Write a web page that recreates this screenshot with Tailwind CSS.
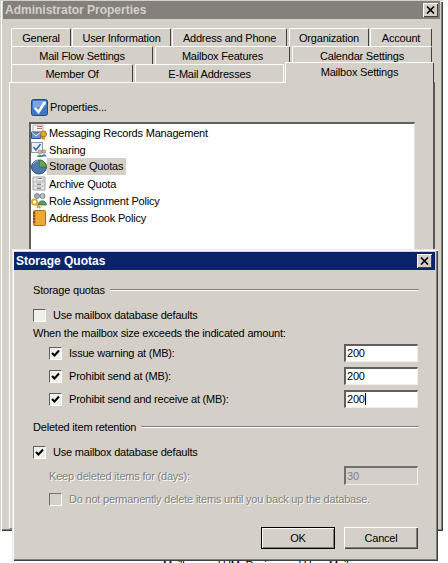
<!DOCTYPE html>
<html lang="en">
<head>
  <meta charset="UTF-8">
  <title>Administrator Properties</title>
  <script src="https://cdn.jsdelivr.net/npm/@tailwindcss/browser@4"></script>
</head>
<body class="bg-white">
  <div class="relative w-[448px] h-[563px] overflow-hidden bg-white text-black text-[11px] tracking-[-0.2px] leading-4 font-['Liberation_Sans',Arial,sans-serif]">

    <!-- Fenetre arriere -->
    <div class="w-[443px] h-[531px] bg-[#d4d0c8] pt-[1px] px-[3px] shadow-[inset_1px_1px_0_#d4d0c8,inset_2px_2px_0_#fff,inset_-1px_-1px_0_#404040,inset_-2px_-2px_0_#808080]">
      <div class="h-[18px] bg-[#84807c] flex items-center justify-between pl-[2px] pr-[2px]">
        <span class="font-bold text-[12px] tracking-normal text-[#d4d0c8]">Administrator Properties</span>
        <span class="w-[15px] h-[14px] bg-[#d4d0c8] flex items-center justify-center shadow-[inset_1px_1px_0_#fff,inset_-1px_-1px_0_#404040]">
          <svg width="9" height="8" viewBox="0 0 9 8"><path d="M1 0.5 L8 7.5 M8 0.5 L1 7.5" stroke="#000" stroke-width="1.6"/></svg>
        </span>
      </div>

      <!-- Onglets -->
      <div class="pt-[9px] pl-[8px]">
        <div class="flex gap-[1px] h-[18px] text-center leading-[18px]">
          <div class="w-[60px] bg-[#d4d0c8] border-t border-l border-white border-r border-r-[#404040] rounded-t-[2px]">General</div>
          <div class="w-[99px] bg-[#d4d0c8] border-t border-l border-white border-r border-r-[#404040] rounded-t-[2px]">User Information</div>
          <div class="w-[115px] bg-[#d4d0c8] border-t border-l border-white border-r border-r-[#404040] rounded-t-[2px]">Address and Phone</div>
          <div class="w-[80px] ml-[1px] bg-[#d4d0c8] border-t border-l border-white border-r border-r-[#404040] rounded-t-[2px]">Organization</div>
          <div class="w-[62px] bg-[#d4d0c8] border-t border-l border-white border-r border-r-[#404040] rounded-t-[2px]">Account</div>
        </div>
        <div class="flex gap-[1px] h-[18px] text-center leading-[18px]">
          <div class="w-[142px] bg-[#d4d0c8] border-t border-l border-white border-r border-r-[#404040] rounded-t-[2px]">Mail Flow Settings</div>
          <div class="w-[135px] ml-[1px] bg-[#d4d0c8] border-t border-l border-white border-r border-r-[#404040] rounded-t-[2px]">Mailbox Features</div>
          <div class="w-[140px] ml-[1px] bg-[#d4d0c8] border-t border-l border-white border-r border-r-[#404040] rounded-t-[2px]">Calendar Settings</div>
        </div>
        <div class="flex gap-[1px] h-[18px] text-center leading-[18px]">
          <div class="w-[122px] bg-[#d4d0c8] border-t border-l border-white border-r border-r-[#404040] rounded-t-[2px]">Member Of</div>
          <div class="w-[149px] ml-[1px] bg-[#d4d0c8] border-t border-l border-r border-white">E-Mail Addresses</div>
          <div class="relative z-10 w-[149px] h-[21px] -mt-[2px] bg-[#d4d0c8] border-t border-l border-white border-r border-r-[#404040] rounded-t-[2px]">Mailbox Settings</div>
        </div>
      </div>

      <!-- Panneau -->
      <div class="ml-[6px] w-[426px] h-[447px] pt-[15px] pl-[19px] border-t border-l border-white border-r-2 border-r-[#5a5a5a] border-b border-b-[#808080]">
        <div class="flex items-center h-[18px] gap-[2px] pl-[2px]">
          <svg width="17" height="17" viewBox="0 0 17 17">
            <rect x="0.5" y="0.5" width="16" height="16" rx="2" fill="#3f78c8" stroke="#234a85"/>
            <path d="M2 2 H15 V6 L2 10 Z" fill="#7ba6e2"/>
            <path d="M4 9 L7.5 13 L14 3" fill="none" stroke="#fff" stroke-width="2.6"/>
          </svg>
          <span>Properties...</span>
        </div>
        <div class="mt-[6px] w-[386px] h-[141px] bg-white border-t-2 border-l-2 border-[#5f5f5f] border-r border-r-[#e8e6e0]">
          <div class="flex items-center h-[17px]">
            <svg width="16" height="17" viewBox="0 0 16 17">
              <path d="M2 1 H12 V9 H2 Z" fill="#f4f4f4" stroke="#b0b0b0"/>
              <path d="M6 2.5 H11 M6 4.5 H11" stroke="#c86a5a"/>
              <path d="M0.5 8 H10 V14.5 H0.5 Z" fill="#6d93c4" stroke="#2f5587"/>
              <path d="M0.5 8 L5 12 L10 8" fill="none" stroke="#dfe8f4"/>
              <circle cx="12.5" cy="10" r="3" fill="#e6a92a" stroke="#a8741a"/>
              <path d="M11 13 V16 L12.5 15 L14 16 V13" fill="#d98e20"/>
            </svg>
            <span class="ml-[2px]">Messaging Records Management</span>
          </div>
          <div class="flex items-center h-[17px]">
            <svg width="16" height="17" viewBox="0 0 16 17">
              <rect x="0.5" y="1.5" width="11" height="10" fill="#eef2f7" stroke="#8d9aaa"/>
              <path d="M2.5 6 L5 9 L9.5 3" fill="none" stroke="#3567b0" stroke-width="1.6"/>
              <circle cx="9" cy="11" r="2" fill="#d9b48a" stroke="#6b6b6b" stroke-width="0.5"/>
              <path d="M6 16 C6 13 12 13 12 16 Z" fill="#4c9a57"/>
              <circle cx="13" cy="10.5" r="1.8" fill="#d9b48a" stroke="#6b6b6b" stroke-width="0.5"/>
              <path d="M10.5 15.5 C10.5 12.5 15.5 12.5 15.5 15.5 Z" fill="#4b78bd"/>
            </svg>
            <span class="ml-[2px]">Sharing</span>
          </div>
          <div class="flex items-center h-[17px]">
            <svg width="16" height="17" viewBox="0 0 16 17">
              <ellipse cx="8" cy="9" rx="7.5" ry="7" fill="#4f78ad" stroke="#2e4f7c"/>
              <path d="M8 9 L9 2 C12 2.3 14.6 4.5 15.5 9 Z" fill="#63a84a" stroke="#3c6f2b" stroke-width="0.7"/>
              <path d="M2 6 C3 4 5 3 7 2.6" fill="none" stroke="#a9c3e2"/>
            </svg>
            <span class="bg-[#d4d0c8] pl-[2px] h-[17px] leading-[17px] pr-[3px]">Storage Quotas</span>
          </div>
          <div class="flex items-center h-[17px]">
            <svg width="16" height="17" viewBox="0 0 16 17">
              <path d="M2 2 H14 V15 H2 Z" fill="#e4e4e4" stroke="#a4a4a4"/>
              <path d="M2 7 H14 M2 11 H14" stroke="#b4b4b4"/>
              <path d="M6 2 H12 V6 H6 Z" fill="#fff" stroke="#b8b8b8"/>
              <path d="M7 3.5 H11" stroke="#c05a4a"/>
              <rect x="6" y="8.5" width="4" height="1.5" fill="#8c8c8c"/>
              <rect x="6" y="12.5" width="4" height="1.5" fill="#8c8c8c"/>
            </svg>
            <span class="ml-[2px]">Archive Quota</span>
          </div>
          <div class="flex items-center h-[17px]">
            <svg width="16" height="17" viewBox="0 0 16 17">
              <circle cx="6" cy="4" r="2.5" fill="#a8b2bd" stroke="#565f69" stroke-width="0.7"/>
              <circle cx="11.5" cy="4" r="2.5" fill="#bcc4cd" stroke="#565f69" stroke-width="0.7"/>
              <path d="M7 13 C7 8 15 7 15.5 13 Z" fill="#5f9a64" stroke="#33633a" stroke-width="0.7"/>
              <circle cx="3.5" cy="10" r="2.6" fill="none" stroke="#d2a92a" stroke-width="1.7"/>
              <path d="M5 12 L9.5 16 M7.5 14.2 L6 16" stroke="#d2a92a" stroke-width="1.7"/>
            </svg>
            <span class="ml-[2px]">Role Assignment Policy</span>
          </div>
          <div class="flex items-center h-[17px]">
            <svg width="16" height="17" viewBox="0 0 16 17">
              <rect x="2.5" y="1.5" width="12" height="15" rx="1" fill="#eda83a" stroke="#a86f14"/>
              <rect x="2" y="2" width="2.5" height="14" fill="#c9861f"/>
              <path d="M2 4 H4 M2 7 H4 M2 10 H4 M2 13 H4" stroke="#222"/>
            </svg>
            <span class="ml-[2px]">Address Book Policy</span>
          </div>
        </div>
      </div>
    </div>

    <!-- Texte derriere le dialogue -->
    <div class="pl-[163px] mt-[26px] whitespace-nowrap">Mailbox and UM. Review and User Mail</div>

    <!-- Dialogue Storage Quotas -->
    <div class="absolute left-[12px] top-[249px] w-[426px] h-[312px] bg-[#d4d0c8] pl-[2px] pr-[3px] pt-[3px] shadow-[inset_1px_1px_0_#e8e6e0,inset_2px_2px_0_#fff,inset_-1px_-1px_0_#404040,inset_-2px_-2px_0_#808080]">
      <div class="h-[18px] bg-[#0a246a] flex items-center justify-between pl-[2px] pr-[3px]">
        <span class="font-bold text-[12px] tracking-normal text-white">Storage Quotas</span>
        <span class="w-[15px] h-[14px] bg-[#d4d0c8] flex items-center justify-center shadow-[inset_1px_1px_0_#fff,inset_-1px_-1px_0_#404040]">
          <svg width="9" height="8" viewBox="0 0 9 8"><path d="M1 0.5 L8 7.5 M8 0.5 L1 7.5" stroke="#000" stroke-width="1.6"/></svg>
        </span>
      </div>

      <div class="pl-[19px] w-[405px]">
        <div class="mt-[12px] flex items-center h-[16px] gap-[5px]">
          <span>Storage quotas</span>
          <div class="flex-1 h-[2px] border-t border-[#808080] border-b border-b-white"></div>
        </div>

        <div class="mt-[9px] flex items-center h-[16px] gap-[7px]">
          <span class="w-[13px] h-[13px] bg-[#f1efea] border border-[#606060] border-r-white border-b-white"></span>
          <span>Use mailbox database defaults</span>
        </div>
        <div class="mt-[2px] h-[16px]">When the mailbox size exceeds the indicated amount:</div>

        <div class="mt-[3px] pl-[16px] pr-[1px] flex items-center h-[18px] gap-[7px]">
          <span class="w-[13px] h-[13px] bg-[#f1efea] border border-[#606060] border-r-white border-b-white flex items-center justify-center">
            <svg width="9" height="9" viewBox="0 0 9 9"><path d="M1 4 L3.5 6.5 L8 1.5" fill="none" stroke="#000" stroke-width="2"/></svg>
          </span>
          <span class="flex-1">Issue warning at (MB):</span>
          <div class="w-[74px] h-[18px] bg-white border-t-2 border-l-2 border-[#5f5f5f] border-r border-b border-r-[#f0eee9] border-b-[#f0eee9] pl-[1px] leading-[15px]">200</div>
        </div>
        <div class="mt-[5px] pl-[16px] pr-[1px] flex items-center h-[18px] gap-[7px]">
          <span class="w-[13px] h-[13px] bg-[#f1efea] border border-[#606060] border-r-white border-b-white flex items-center justify-center">
            <svg width="9" height="9" viewBox="0 0 9 9"><path d="M1 4 L3.5 6.5 L8 1.5" fill="none" stroke="#000" stroke-width="2"/></svg>
          </span>
          <span class="flex-1">Prohibit send at (MB):</span>
          <div class="w-[74px] h-[18px] bg-white border-t-2 border-l-2 border-[#5f5f5f] border-r border-b border-r-[#f0eee9] border-b-[#f0eee9] pl-[1px] leading-[15px]">200</div>
        </div>
        <div class="mt-[5px] pl-[16px] pr-[1px] flex items-center h-[18px] gap-[7px]">
          <span class="w-[13px] h-[13px] bg-[#f1efea] border border-[#606060] border-r-white border-b-white flex items-center justify-center">
            <svg width="9" height="9" viewBox="0 0 9 9"><path d="M1 4 L3.5 6.5 L8 1.5" fill="none" stroke="#000" stroke-width="2"/></svg>
          </span>
          <span class="flex-1">Prohibit send and receive at (MB):</span>
          <div class="w-[74px] h-[18px] bg-white border-t-2 border-l-2 border-[#5f5f5f] border-r border-b border-r-[#f0eee9] border-b-[#f0eee9] pl-[1px] leading-[15px]"><span class="border-r border-black">200</span></div>
        </div>

        <div class="mt-[11px] flex items-center h-[16px] gap-[5px]">
          <span>Deleted item retention</span>
          <div class="flex-1 h-[2px] border-t border-[#808080] border-b border-b-white"></div>
        </div>

        <div class="mt-[9px] flex items-center h-[16px] gap-[7px]">
          <span class="w-[13px] h-[13px] bg-[#f1efea] border border-[#606060] border-r-white border-b-white flex items-center justify-center">
            <svg width="9" height="9" viewBox="0 0 9 9"><path d="M1 4 L3.5 6.5 L8 1.5" fill="none" stroke="#000" stroke-width="2"/></svg>
          </span>
          <span>Use mailbox database defaults</span>
        </div>

        <div class="mt-[6px] pl-[16px] pr-[1px] flex items-center h-[19px] text-[#808080] [text-shadow:1px_1px_0_#fff]">
          <span class="flex-1">Keep deleted items for (days):</span>
          <div class="w-[74px] h-[19px] bg-[#d4d0c8] border-t-2 border-l-2 border-[#6f6f6f] border-r border-b border-r-[#f0eee9] border-b-[#f0eee9] pl-[1px] leading-[16px] [text-shadow:none]">30</div>
        </div>
        <div class="mt-[6px] pl-[16px] flex items-center h-[16px] gap-[7px] text-[#808080] [text-shadow:1px_1px_0_#fff]">
          <span class="w-[13px] h-[13px] bg-[#d4d0c8] border border-[#707070] border-r-white border-b-white"></span>
          <span>Do not permanently delete items until you back up the database.</span>
        </div>

        <div class="mt-[20px] pr-[1px] flex justify-end gap-[9px]">
          <div class="w-[74px] h-[22px] flex items-center justify-center border border-black shadow-[inset_1px_1px_0_#fff,inset_-1px_-1px_0_#808080]">OK</div>
          <div class="w-[74px] h-[22px] flex items-center justify-center shadow-[inset_1px_1px_0_#fff,inset_-1px_-1px_0_#404040,inset_-2px_-2px_0_#808080]">Cancel</div>
        </div>
      </div>
    </div>
  </div>
</body>
</html>
